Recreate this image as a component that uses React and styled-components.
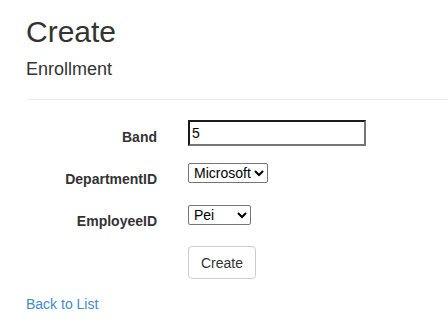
import React from "react";
import styled, { createGlobalStyle } from "styled-components";

const GlobalStyle = createGlobalStyle`
  html, body {
    margin: 0;
    padding: 0;
    background: #fff;
  }
  body {
    font-family: "Liberation Sans", Arial, sans-serif;
    font-size: 14px;
    line-height: 20px;
    color: #333;
    overflow: hidden;
  }
`;

export default function App() {
  return (
    <Page>
      <GlobalStyle />
      <Title>Create</Title>
      <Subtitle>Enrollment</Subtitle>
      <Rule />
      <Form onSubmit={(e) => e.preventDefault()}>
        <Group>
          <Label htmlFor="Band">Band</Label>
          <TextInput id="Band" type="text" defaultValue="5" />
        </Group>
        <Group>
          <Label htmlFor="DepartmentID">DepartmentID</Label>
          <Select id="DepartmentID" width={80} defaultValue="1">
            <option value="1">Microsoft</option>
          </Select>
        </Group>
        <Group>
          <Label htmlFor="EmployeeID">EmployeeID</Label>
          <Select id="EmployeeID" width={63} defaultValue="1">
            <option value="1">Pei</option>
          </Select>
        </Group>
        <Group>
          <Spacer />
          <Button type="submit">Create</Button>
        </Group>
      </Form>
      <div>
        <Link href="#">Back to List</Link>
      </div>
    </Page>
  );
}

const Page = styled.div`
  padding: 15px 0 0 26px;
`;

const Title = styled.h2`
  margin: 0;
  font-size: 30px;
  font-weight: 500;
  line-height: 33px;
`;

const Subtitle = styled.h4`
  margin: 11px 0 0;
  font-size: 18px;
  font-weight: 500;
  line-height: 20px;
`;

const Rule = styled.hr`
  margin: 20px 0 20px;
  border: 0;
  border-top: 1px solid #eee;
  height: 0;
`;

const Form = styled.form`
  margin: 0;
`;

const Group = styled.div`
  display: grid;
  grid-template-columns: 131px auto;
  column-gap: 31px;
  align-items: start;
  justify-content: start;
  margin-bottom: 15px;
`;

const Label = styled.label`
  padding-top: 7px;
  text-align: right;
  font-weight: bold;
  white-space: nowrap;
`;

const Spacer = styled.div``;

const TextInput = styled.input`
  box-sizing: border-box;
  width: 178px;
  height: 26px;
  margin: 0;
  padding: 1px 2px;
  font: 14px "Liberation Sans", Arial, sans-serif;
  color: #000;
  border-width: 2px;
  border-style: solid;
  border-color: #1a1a1a #767676 #767676 #1a1a1a;
  outline: none;
`;

const Select = styled.select`
  box-sizing: border-box;
  width: ${(p) => p.width}px;
  height: 20px;
  margin: 1px 0 0;
  padding: 0 0 0 1px;
  font: 14px "Liberation Sans", Arial, sans-serif;
  color: #000;
  background: #fff;
  border: 1px solid #767676;
  border-radius: 2px;
`;

const Button = styled.button`
  box-sizing: border-box;
  height: 33px;
  padding: 0 12px;
  font: 14px "Liberation Sans", Arial, sans-serif;
  color: #333;
  background: #fff;
  border: 1px solid #ccc;
  border-radius: 4px;
  cursor: pointer;
`;

const Link = styled.a`
  color: #428bca;
  text-decoration: none;
`;
